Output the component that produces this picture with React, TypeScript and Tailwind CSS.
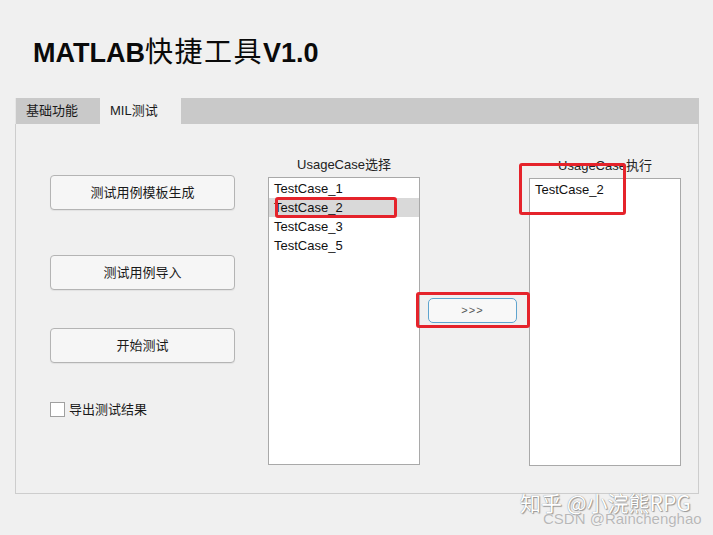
import React from "react";

const FONT = { fontFamily: '"Liberation Sans", Arial, "Noto Sans CJK SC", sans-serif' };

function Btn({ label }: { label: string }) {
  return (
    <button className="w-[185px] h-[35px] rounded-[4px] border border-[#b4b4b4] bg-[#f6f6f6] text-[13px] text-[#1a1a1a] shadow-[0_1px_1px_rgba(0,0,0,0.06)]">
      {label}
    </button>
  );
}

function ListBox({ title, items, selected }: { title: string; items: string[]; selected?: number }) {
  return (
    <div className="flex flex-col items-center w-[152px]">
      <div className="h-[18px] leading-[18px] text-[13px] text-[#222]">{title}</div>
      <div className="mt-[3px] w-[152px] h-[288px] bg-white border border-[#a9a9a9] pt-px">
        {items.map((it, i) => (
          <div
            key={it}
            className={
              "h-[19px] leading-[19px] pl-[5px] text-[13px] text-[#111] " +
              (i === selected ? "bg-[#d9d9d9]" : "")
            }
          >
            {it}
          </div>
        ))}
      </div>
    </div>
  );
}

export default function App() {
  return (
    <div className="relative w-[713px] h-[535px] bg-[#f0f0f0] overflow-hidden" style={FONT}>
      <h1 className="pl-[33px] pt-[39px] h-[98px] text-[27px] leading-none font-bold text-[#0a0a0a]">
        MATLAB<span className="font-normal text-[28px] tracking-[1.5px]">快捷工具</span>V1.0
      </h1>

      <div className="ml-[15px] w-[684px] h-[396px] flex flex-col">
        <div className="h-[26px] bg-[#c9c9c9] flex text-[13px] text-[#1a1a1a]">
          <div className="w-[85px] pl-[10px] leading-[26px] border-l border-[#e6e6e6]">基础功能</div>
          <div className="w-[81px] pl-[10px] leading-[26px] bg-[#f0f0f0]">MIL测试</div>
        </div>
        <div className="flex-1 border-l border-r border-b border-[#cdcdcd] flex pl-[34px]">
          <div className="flex flex-col pt-[51px]">
            <Btn label="测试用例模板生成" />
            <div className="mt-[45px]">
              <Btn label="测试用例导入" />
            </div>
            <div className="mt-[38px]">
              <Btn label="开始测试" />
            </div>
            <label className="mt-[37px] flex items-center gap-[4px] text-[13px] text-[#1a1a1a]">
              <span className="w-[15px] h-[15px] bg-white border border-[#a0a0a0]" />
              导出测试结果
            </label>
          </div>

          <div className="ml-[33px] pt-[32px]">
            <ListBox
              title="UsageCase选择"
              items={["TestCase_1", "TestCase_2", "TestCase_3", "TestCase_5"]}
              selected={1}
            />
          </div>

          <div className="ml-[8px] pt-[173px]">
            <button className="w-[89px] h-[25px] rounded-[5px] border border-[#5ea4cf] bg-[#f8f8f8] text-[11px] text-[#555] tracking-[1px]">
              {">>>"}
            </button>
          </div>

          <div className="ml-[12px] pt-[33px]">
            <ListBox title="UsageCase执行" items={["TestCase_2"]} />
          </div>
        </div>
      </div>

      {/* red annotation boxes */}
      <div className="absolute left-[275px] top-[197px] w-[122px] h-[21px] border-[3px] border-[#e5232b] rounded-[3px]" />
      <div className="absolute left-[519px] top-[163px] w-[107px] h-[52px] border-[3px] border-[#e5232b] rounded-[3px]" />
      <div className="absolute left-[416px] top-[292px] w-[114px] h-[36px] border-[3px] border-[#e5232b] rounded-[3px]" />

      {/* watermark */}
      <div
        className="absolute left-[520px] top-[492px] text-[21px] leading-none text-white [text-shadow:0_0_1px_#777,1px_1px_1px_#999]"
        style={{ fontFamily: '"Noto Sans CJK SC", "Liberation Sans", sans-serif' }}
      >
        知乎 @小浣熊RPG
      </div>
      <div className="absolute left-[543px] top-[511px] text-[15px] leading-none text-[#b8b8b8] [text-shadow:0_0_1px_#fff]">
        CSDN @Rainchenghao
      </div>
    </div>
  );
}
